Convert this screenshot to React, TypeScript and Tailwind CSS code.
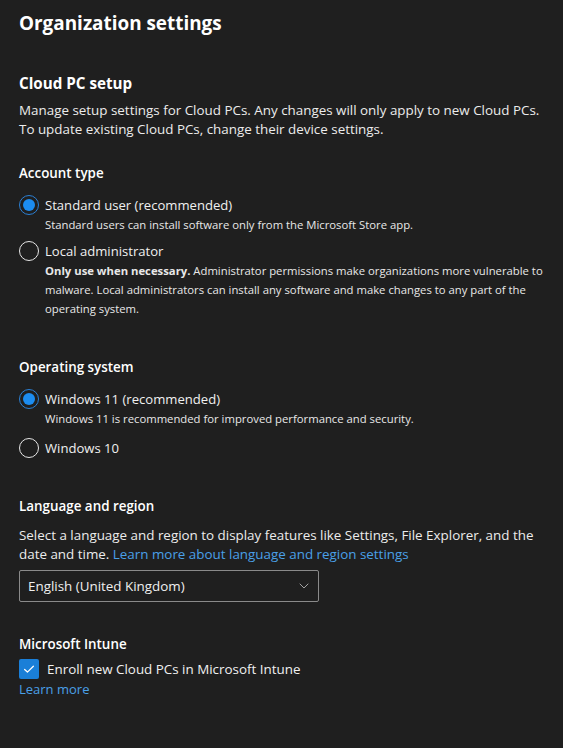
import { ChevronDown } from "lucide-react";

function Radio({
  checked,
  label,
  children,
}: {
  checked?: boolean;
  label: string;
  children?: React.ReactNode;
}) {
  return (
    <div className="flex items-start gap-[6px]">
      <span
        className={`flex h-[20px] w-[20px] shrink-0 items-center justify-center rounded-full border ${
          checked ? "border-[#2b7fd3]" : "border-[#e6e6e6]"
        }`}
      >
        {checked && <span className="h-[12px] w-[12px] rounded-full bg-[#1c8cf0]" />}
      </span>
      <div className="min-w-0">
        <div className="text-[13.1px] leading-[20px] text-[#f0f0f0]">{label}</div>
        {children && (
          <div className="text-[11.3px] leading-[19px] text-[#e8e8e8]">{children}</div>
        )}
      </div>
    </div>
  );
}

export default function App() {
  return (
    <div
      className="min-h-[748px] w-[563px] bg-[#1f1f1f] px-[19px] pt-[10px] text-white"
      style={{ fontFamily: '"Open Sans", "Noto Sans", sans-serif' }}
    >
      <h1 className="text-[18.9px] font-bold leading-[26px]">Organization settings</h1>

      <h2 className="mt-[36px] text-[15.2px] font-bold leading-[22px]">Cloud PC setup</h2>
      <p className="mt-[7px] text-[13.4px] leading-[19px] text-[#ececec]">
        Manage setup settings for Cloud PCs. Any changes will only apply to new Cloud PCs.
        To update existing Cloud PCs, change their device settings.
      </p>

      <h3 className="mt-[25px] text-[13.4px] font-semibold leading-[19px]">Account type</h3>
      <div className="mt-[12px] flex flex-col gap-[7px]">
        <Radio checked label="Standard user (recommended)">
          Standard users can install software only from the Microsoft Store app.
        </Radio>
        <Radio label="Local administrator">
          <span className="font-bold">Only use when necessary.</span> Administrator permissions
          make organizations more vulnerable to malware. Local administrators can install any
          software and make changes to any part of the operating system.
        </Radio>
      </div>

      <h3 className="mt-[40px] text-[13.4px] font-semibold leading-[19px]">Operating system</h3>
      <div className="mt-[12px] flex flex-col gap-[10px]">
        <Radio checked label="Windows 11 (recommended)">
          Windows 11 is recommended for improved performance and security.
        </Radio>
        <Radio label="Windows 10" />
      </div>

      <h3 className="mt-[39px] text-[13.4px] font-semibold leading-[19px]">Language and region</h3>
      <p className="mt-[10px] text-[13.4px] leading-[19px] text-[#ececec]">
        Select a language and region to display features like Settings, File Explorer, and the
        date and time.{" "}
        <span className="text-[#4aa0e8]">Learn more about language and region settings</span>
      </p>
      <div className="mt-[6px] flex h-[32px] w-[300px] items-center justify-between rounded-[2px] border border-[#8a8a8a] pl-[8px] pr-[6px]">
        <span className="text-[13.4px] text-[#f0f0f0]">English (United Kingdom)</span>
        <ChevronDown className="h-[16px] w-[16px] text-[#bdbdbd]" strokeWidth={1.25} />
      </div>

      <h3 className="mt-[33px] text-[13.4px] font-semibold leading-[19px]">Microsoft Intune</h3>
      <div className="mt-[5px] flex items-center gap-[8px]">
        <span className="flex h-[20px] w-[20px] items-center justify-center rounded-[2px] bg-[#1a7fd8]">
          <svg viewBox="0 0 16 16" className="h-[14px] w-[14px]" fill="none">
            <path d="M3 8.5l3.2 3L13 4.8" stroke="white" strokeWidth="1.4" strokeLinecap="round" strokeLinejoin="round" />
          </svg>
        </span>
        <span className="text-[13.4px] leading-[20px] text-[#f0f0f0]">Enroll new Cloud PCs in Microsoft Intune</span>
      </div>
      <div className="text-[13px] leading-[20px] text-[#4aa0e8]">Learn more</div>
    </div>
  );
}
